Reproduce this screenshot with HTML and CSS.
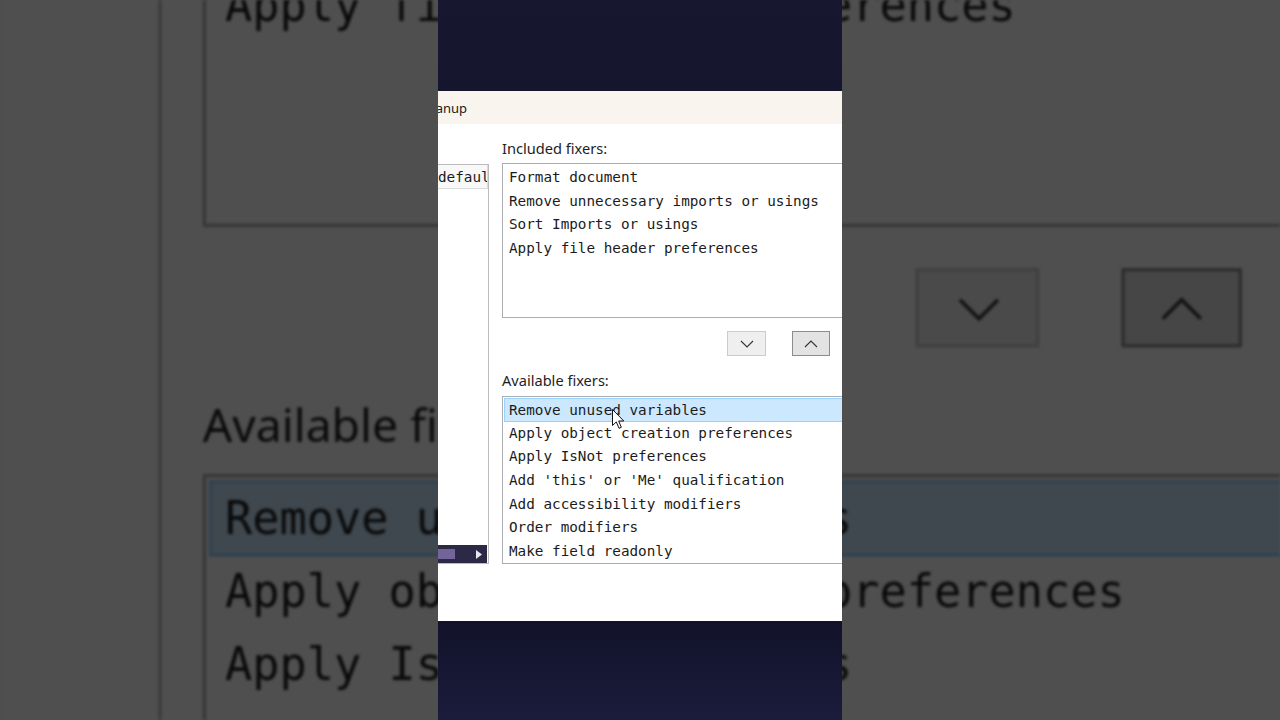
FILE: index.html
```html
<!DOCTYPE html>
<html lang="en">
<head>
<meta charset="utf-8">
<title>Code Cleanup</title>
<link rel="stylesheet" href="styles.css">
</head>
<body>
<div class="backdrop" aria-hidden="true">
  <div class="frame frame-zoom">
    <div class="band band-top"></div>
    <section class="dialog">
      <header class="titlebar"><div class="title"><span>Code Cleanup</span></div></header>
      <div class="dialog-body">
        <aside class="profiles">
          <div class="profiles-list"><div class="profile-item">default</div></div>
          <div class="hscroll"><span class="hscroll-thumb"></span><svg class="hscroll-arrow" width="6" height="9" viewBox="0 0 6 9"><path d="M0 0 L6 4.5 L0 9 Z" fill="#e8e6f0"/></svg></div>
        </aside>
        <div class="fixers">
          <div class="label">Included fixers:</div>
          <ul class="listbox listbox-included">
            <li>Format document</li>
            <li>Remove unnecessary imports or usings</li>
            <li>Sort Imports or usings</li>
            <li>Apply file header preferences</li>
          </ul>
          <div class="movers">
            <button class="mover"><svg width="14" height="8" viewBox="0 0 14 8"><path d="M1 1 L7 7 L13 1" fill="none" stroke="#333" stroke-width="1.1"/></svg></button>
            <button class="mover mover-default"><svg width="14" height="8" viewBox="0 0 14 8"><path d="M1 7 L7 1 L13 7" fill="none" stroke="#333" stroke-width="1.1"/></svg></button>
          </div>
          <div class="label label-available">Available fixers:</div>
          <ul class="listbox listbox-available">
            <li class="selected">Remove unused variables</li>
            <li>Apply object creation preferences</li>
            <li>Apply IsNot preferences</li>
            <li>Add 'this' or 'Me' qualification</li>
            <li>Add accessibility modifiers</li>
            <li>Order modifiers</li>
            <li>Make field readonly</li>
          </ul>
        </div>
      </div>
    </section>
    <div class="band band-bottom"></div>
  </div>
</div>

<main class="stage">
  <div class="frame">
    <div class="band band-top"></div>
    <section class="dialog">
      <header class="titlebar"><div class="title"><span>Code Cleanup</span></div></header>
      <div class="dialog-body">
        <aside class="profiles">
          <div class="profiles-list"><div class="profile-item">default</div></div>
          <div class="hscroll"><span class="hscroll-thumb"></span><svg class="hscroll-arrow" width="6" height="9" viewBox="0 0 6 9"><path d="M0 0 L6 4.5 L0 9 Z" fill="#e8e6f0"/></svg></div>
        </aside>
        <div class="fixers">
          <div class="label">Included fixers:</div>
          <ul class="listbox listbox-included">
            <li>Format document</li>
            <li>Remove unnecessary imports or usings</li>
            <li>Sort Imports or usings</li>
            <li>Apply file header preferences</li>
          </ul>
          <div class="movers">
            <button class="mover" aria-label="Move down"><svg width="14" height="8" viewBox="0 0 14 8"><path d="M1 1 L7 7 L13 1" fill="none" stroke="#333" stroke-width="1.1"/></svg></button>
            <button class="mover mover-default" aria-label="Move up"><svg width="14" height="8" viewBox="0 0 14 8"><path d="M1 7 L7 1 L13 7" fill="none" stroke="#333" stroke-width="1.1"/></svg></button>
          </div>
          <div class="label label-available">Available fixers:</div>
          <ul class="listbox listbox-available">
            <li class="selected">Remove unused variables</li>
            <li>Apply object creation preferences</li>
            <li>Apply IsNot preferences</li>
            <li>Add 'this' or 'Me' qualification</li>
            <li>Add accessibility modifiers</li>
            <li>Order modifiers</li>
            <li>Make field readonly</li>
          </ul>
        </div>
      </div>
      <svg class="cursor" width="13" height="21" viewBox="0 0 13 21"><path d="M0.5 0.5 L0.5 16.5 L4.3 12.9 L7 19.3 L9.3 18.3 L6.7 12 L11.8 12 Z" fill="#fff" stroke="#111" stroke-width="1" stroke-linejoin="round"/></svg>
    </section>
    <div class="band band-bottom"></div>
  </div>
</main>
</body>
</html>
```

FILE: styles.css
```css
* { box-sizing: border-box; }

html, body {
  margin: 0;
  padding: 0;
}

body {
  width: 1280px;
  height: 720px;
  overflow: hidden;
  position: relative;
  background: #4f4f4f;
  font-family: "Noto Sans", "Open Sans", sans-serif;
  color: #1e1e1e;
}

/* blurred, darkened zoom of the same video frame behind it */
.backdrop {
  position: absolute;
  inset: 0;
  overflow: hidden;
  display: flex;
  justify-content: center;
  filter: brightness(0.31) blur(1.4px);
}

.frame-zoom {
  transform: scale(3.168);
  transform-origin: 50% 50%;
}

.stage {
  position: relative;
  height: 720px;
  display: flex;
  justify-content: center;
}

.frame {
  width: 404px;
  height: 720px;
  flex-shrink: 0;
  display: flex;
  flex-direction: column;
  overflow: hidden;
}

.band-top {
  height: 91px;
  background: linear-gradient(#17172f, #15152d);
}

.band-bottom {
  flex: 1;
  background: linear-gradient(#12122a, #1b1c3c);
}

.dialog {
  height: 530px;
  background: #ffffff;
  position: relative;
  display: flex;
  flex-direction: column;
  overflow: hidden;
}

.titlebar {
  height: 33px;
  background: #f9f5ee;
  display: flex;
  align-items: center;
  flex-shrink: 0;
}

.title {
  width: 29px;
  display: flex;
  justify-content: flex-end;
  white-space: nowrap;
  font-size: 13px;
  color: #1a1a1a;
}

.dialog-body {
  display: flex;
  flex: 1;
}

.profiles {
  width: 51px;
  height: 400px;
  margin-top: 40px;
  flex-shrink: 0;
  border: 1px solid #bcbcbc;
  border-left: none;
  display: flex;
  flex-direction: column;
}

.profiles-list {
  flex: 1;
}

.profile-item {
  height: 24px;
  line-height: 25px;
  background: #f8f8f8;
  border-bottom: 1px solid #dadada;
  border-right: 1px solid #dadada;
  font-family: "DejaVu Sans Mono", monospace;
  font-size: 14.3px;
  color: #1b1b1b;
  white-space: nowrap;
  overflow: hidden;
}

.hscroll {
  height: 18px;
  margin-right: 1px;
  background: #2b2946;
  display: flex;
  align-items: center;
  justify-content: space-between;
  padding-right: 5px;
}

.hscroll-thumb {
  width: 17px;
  height: 10px;
  background: #72659a;
}

.fixers {
  width: 360px;
  flex-shrink: 0;
  margin-left: 13px;
  padding-top: 14px;
}

.label {
  height: 20px;
  line-height: 20px;
  font-size: 14.6px;
  color: #1e1e1e;
  white-space: nowrap;
}

.label-available {
  margin-top: 14px;
}

.listbox {
  list-style: none;
  margin: 0;
  padding: 2px 0 0 0;
  border: 1px solid #acadb3;
  font-family: "DejaVu Sans Mono", monospace;
  font-size: 14.3px;
  color: #1b1b1b;
  overflow: hidden;
}

.listbox li {
  height: 23.7px;
  line-height: 23.7px;
  margin-left: 1px;
  padding-left: 5px;
  white-space: nowrap;
}

.listbox li.selected {
  background: #cce8ff;
  border: 1px solid #99d1ff;
  padding-left: 4px;
  line-height: 22.7px;
}

.listbox-included {
  margin-top: 5px;
  height: 155px;
}

.listbox-available {
  margin-top: 6px;
  height: 168px;
  padding-top: 1px;
}

.movers {
  margin-top: 13px;
  padding-left: 225px;
  display: flex;
  gap: 26px;
}

.mover {
  width: 39px;
  height: 25px;
  padding: 0;
  margin: 0;
  background: #efefef;
  border: 1px solid #cbcbcb;
  display: flex;
  align-items: center;
  justify-content: center;
}

.mover-default {
  width: 38px;
  background: #e3e3e3;
  border-color: #8c8c8c;
}

.cursor {
  position: absolute;
  left: 174px;
  top: 318px;
}
```
